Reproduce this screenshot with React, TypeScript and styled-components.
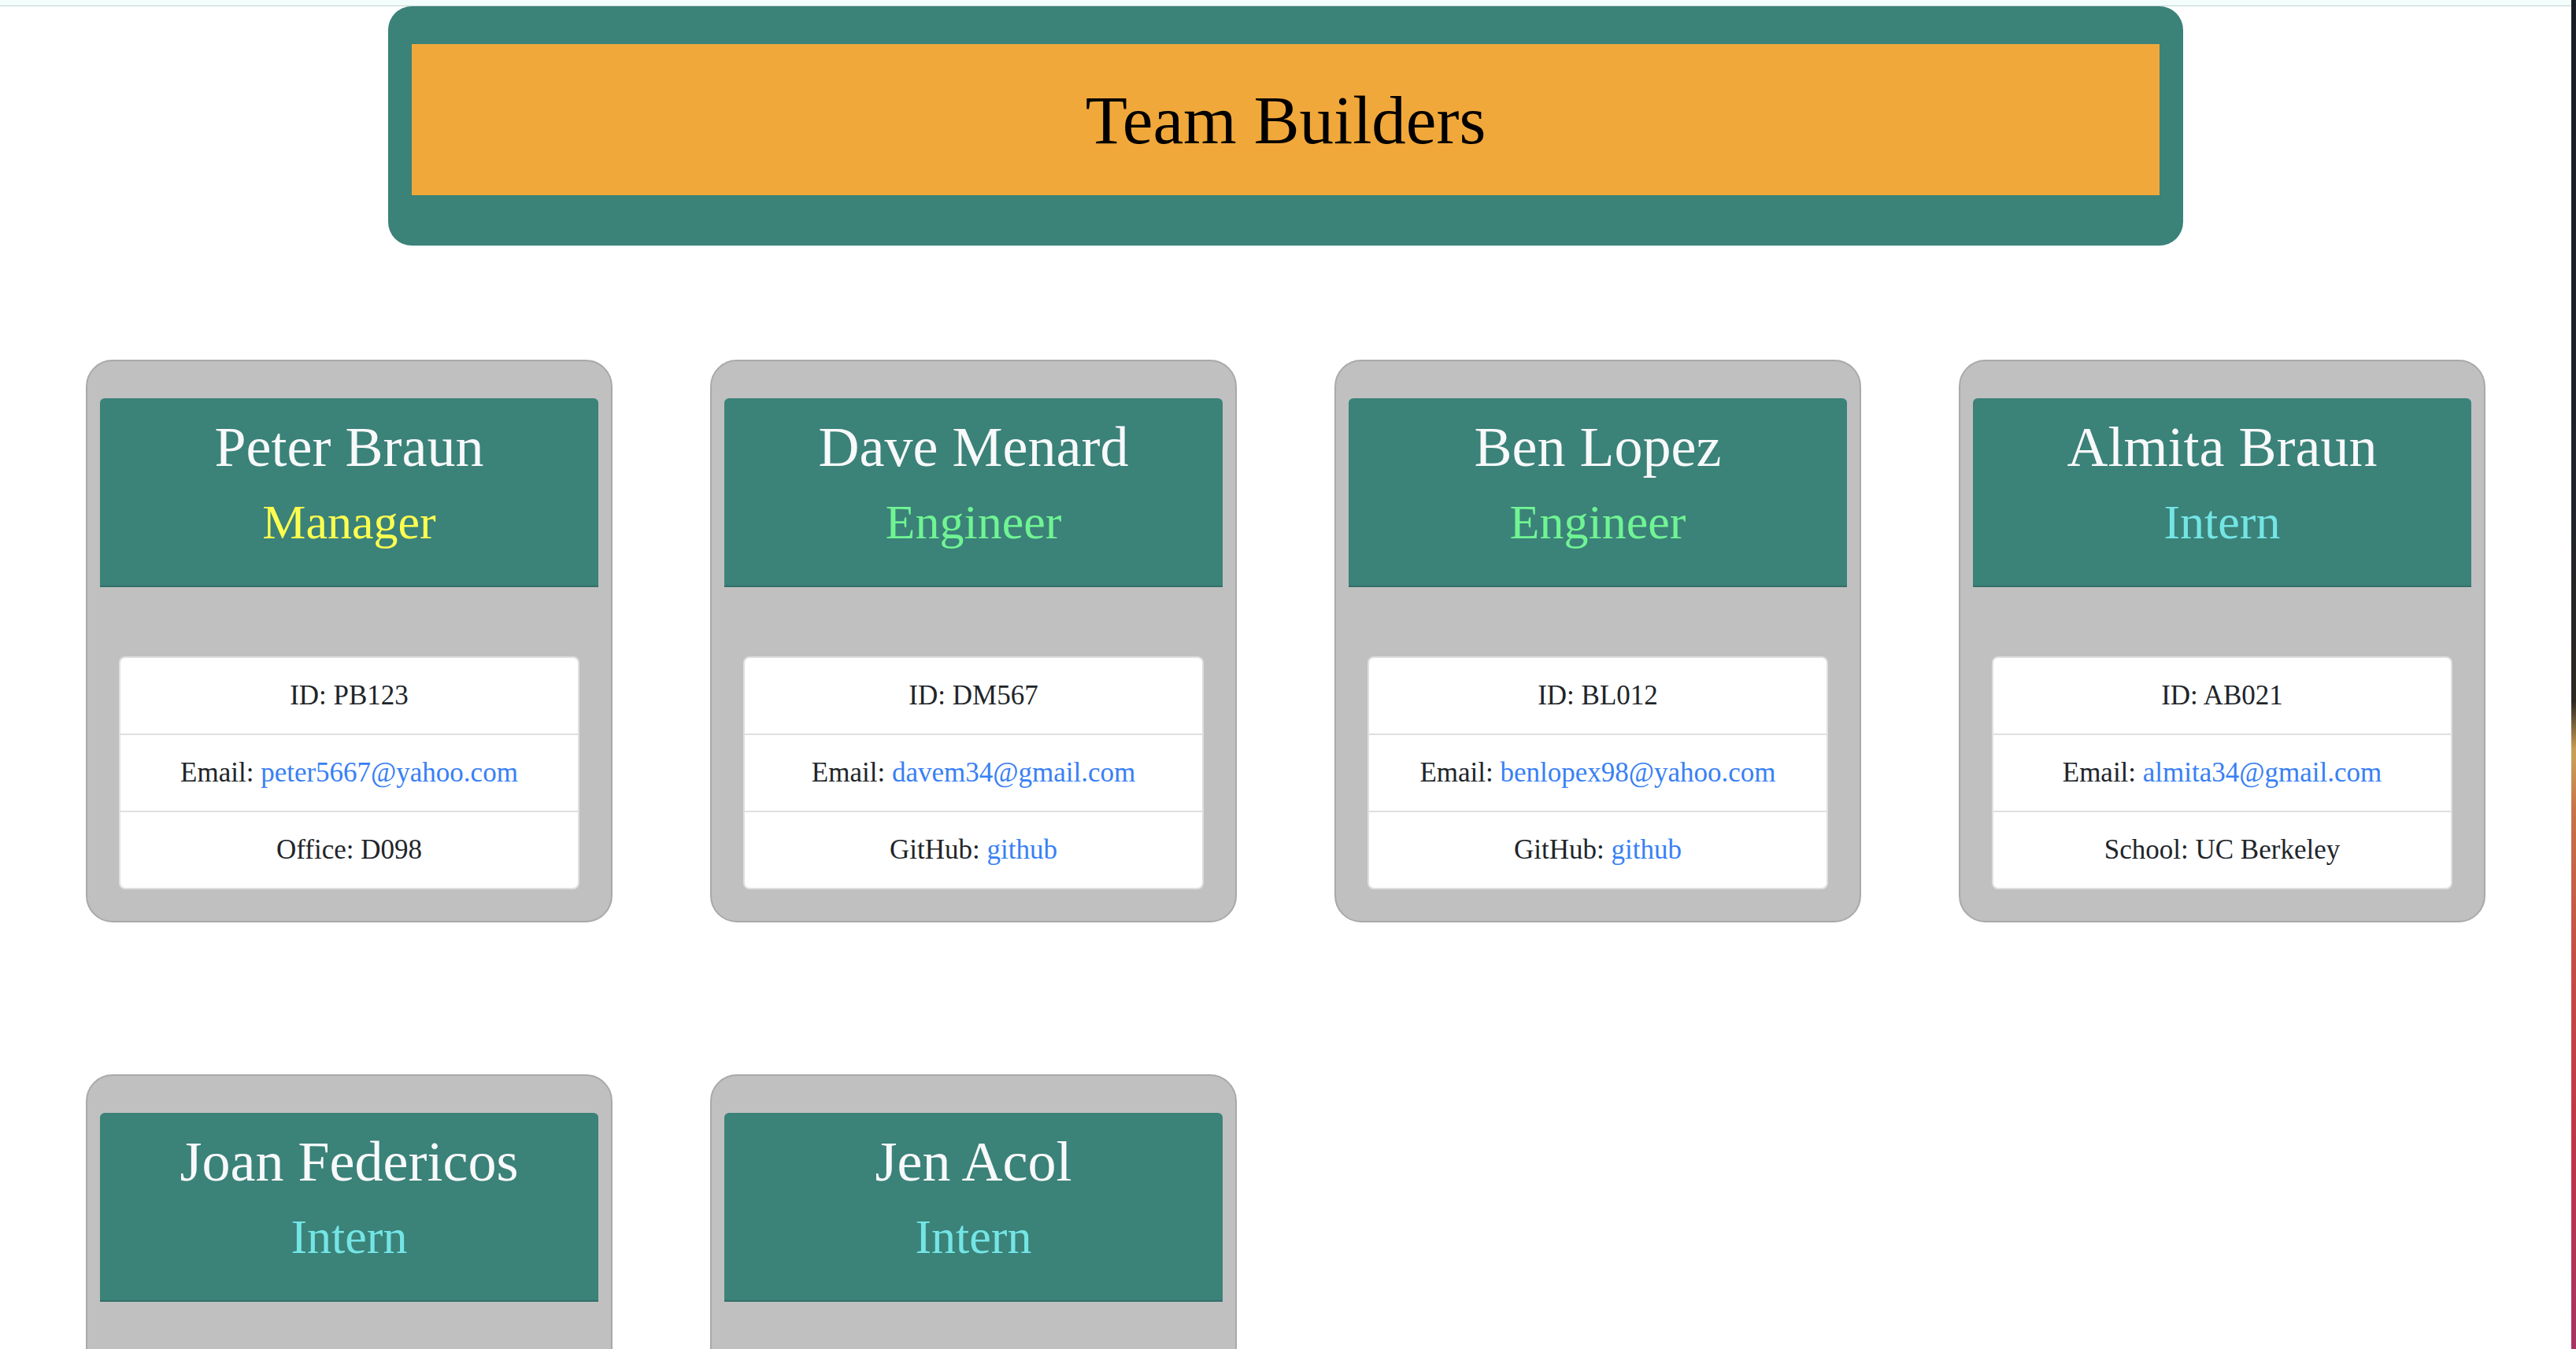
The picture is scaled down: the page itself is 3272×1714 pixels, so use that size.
import React from 'react';
import styled, { createGlobalStyle } from 'styled-components';

type Role = 'Manager' | 'Engineer' | 'Intern';

type Member = {
	name: string;
	role: Role;
	id: string;
	email: string;
	extraLabel: string;
	extraValue: string;
	extraIsLink?: boolean;
};

const team: Member[] = [
	{ name: 'Peter Braun', role: 'Manager', id: 'PB123', email: 'peter5667@yahoo.com', extraLabel: 'Office', extraValue: 'D098' },
	{ name: 'Dave Menard', role: 'Engineer', id: 'DM567', email: 'davem34@gmail.com', extraLabel: 'GitHub', extraValue: 'github', extraIsLink: true },
	{ name: 'Ben Lopez', role: 'Engineer', id: 'BL012', email: 'benlopex98@yahoo.com', extraLabel: 'GitHub', extraValue: 'github', extraIsLink: true },
	{ name: 'Almita Braun', role: 'Intern', id: 'AB021', email: 'almita34@gmail.com', extraLabel: 'School', extraValue: 'UC Berkeley' },
	{ name: 'Joan Federicos', role: 'Intern', id: 'JF045', email: 'joanf@gmail.com', extraLabel: 'School', extraValue: 'UCLA' },
	{ name: 'Jen Acol', role: 'Intern', id: 'JA078', email: 'jenacol@gmail.com', extraLabel: 'School', extraValue: 'UC Davis' },
];

const roleColors: Record<Role, string> = {
	Manager: '#ffff4f',
	Engineer: '#70f493',
	Intern: '#74e5e5',
};

const App = () => {
	return (
		<>
			<GlobalStyle />
			<Frame>
				<Page>
					<TopBar />
					<Jumbotron>
						<TitleBand>
							<h1>Team Builders</h1>
						</TitleBand>
					</Jumbotron>
					<CardGrid>
						{team.map((member) => (
							<Card key={member.id}>
								<CardHeader>
									<Name>{member.name}</Name>
									<RoleTitle color={roleColors[member.role]}>{member.role}</RoleTitle>
								</CardHeader>
								<CardBody>
									<ListGroup>
										<ListItem>ID: {member.id}</ListItem>
										<ListItem>
											Email: <Link href={`mailto:${member.email}`}>{member.email}</Link>
										</ListItem>
										<ListItem>
											{member.extraLabel}:{' '}
											{member.extraIsLink ? (
												<Link href='#'>{member.extraValue}</Link>
											) : (
												member.extraValue
											)}
										</ListItem>
									</ListGroup>
								</CardBody>
							</Card>
						))}
					</CardGrid>
				</Page>
				<Wallpaper />
			</Frame>
		</>
	);
};

export default App;

const GlobalStyle = createGlobalStyle`
	html, body {
		margin: 0;
		padding: 0;
		overflow: hidden;
		background: #ffffff;
	}
	body {
		font-family: 'Liberation Serif', 'Times New Roman', serif;
		color: #212529;
	}
	* {
		box-sizing: border-box;
	}
`;

const Frame = styled.div`
	display: flex;
	width: 100vw;
	height: 100vh;
`;

const Page = styled.div`
	flex: 1;
	min-width: 0;
	background: #ffffff;
`;

const Wallpaper = styled.div`
	width: 6px;
	flex-shrink: 0;
	background: linear-gradient(
		180deg,
		#1a1e24 0%,
		#20242a 38%,
		#2d2822 52%,
		#c99c56 55.5%,
		#c9a058 56%,
		#c87448 60%,
		#c64a44 72%,
		#c03448 85%,
		#a83262 100%
	);
`;

const TopBar = styled.div`
	height: 8px;
	background: #f3fdfc;
	border-bottom: 1px solid #bfd4d2;
`;

const Jumbotron = styled.header`
	width: 2280px;
	margin: 0 auto;
	padding: 48px 30px 64px;
	background-color: #3b8279;
	border-radius: 30px;
`;

const TitleBand = styled.div`
	background-color: #f1a83a;
	height: 192px;
	display: flex;
	align-items: center;
	justify-content: center;
	h1 {
		margin: 0;
		font-size: 87px;
		font-weight: 400;
		line-height: 1;
		color: #000000;
	}
`;

const CardGrid = styled.main`
	display: grid;
	grid-template-columns: repeat(4, 669px);
	justify-content: center;
	column-gap: 124px;
	row-gap: 193px;
	margin-top: 145px;
`;

const Card = styled.div`
	width: 669px;
	background-color: #c0c0c0;
	border: 2px solid #a9a9a9;
	border-radius: 34px;
	padding: 47px 16px 0;
`;

const CardHeader = styled.div`
	background-color: #3b8279;
	border-bottom: 2px solid #336f68;
	border-radius: 6px 6px 0 0;
	padding: 22px 16px 46px;
	text-align: center;
`;

const Name = styled.h2`
	margin: 0 0 20px;
	font-size: 72px;
	line-height: 80px;
	font-weight: 400;
	color: #f8f9fa;
`;

const RoleTitle = styled.h3<{ color: string }>`
	margin: 0;
	font-size: 62px;
	line-height: 70px;
	font-weight: 400;
	color: ${(p) => p.color};
`;

const CardBody = styled.div`
	padding: 88px 24px 40px;
`;

const ListGroup = styled.ul`
	list-style: none;
	margin: 0;
	padding: 0;
	background: #ffffff;
	border: 2px solid #dfdfdf;
	border-radius: 8px;
	overflow: hidden;
`;

const ListItem = styled.li`
	padding: 24px 20px;
	font-size: 35px;
	line-height: 48px;
	text-align: center;
	color: #212529;
	& + & {
		border-top: 2px solid #dfdfdf;
	}
`;

const Link = styled.a`
	color: #3880f5;
	text-decoration: none;
`;
